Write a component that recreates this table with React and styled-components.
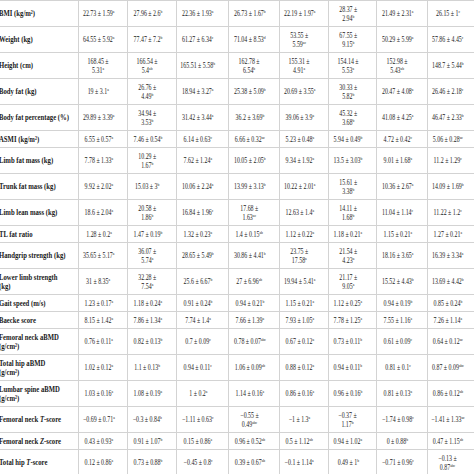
import React from 'react';
import styled, { createGlobalStyle } from 'styled-components';

const COL_WIDTHS = [82, 49, 49, 52, 51, 49, 48, 51, 50];

// "|" marks a line break inside a cell, "^" starts the superscript letters
const ROWS = [
  ['BMI (kg/m²)', ['22.73 ± 1.59^a', '27.96 ± 2.6^b', '22.36 ± 1.93^a', '26.73 ± 1.67^b', '22.19 ± 1.97^a', '28.37 ±|2.94^b', '21.49 ± 2.31^a', '26.15 ± 1^c']],
  ['Weight (kg)', ['64.55 ± 5.92^a', '77.47 ± 7.2^b', '61.27 ± 6.34^c', '71.04 ± 8.53^d', '53.55 ±|5.59^ac', '67.55 ±|9.15^b', '50.29 ± 5.99^a', '57.86 ± 4.45^c']],
  ['Height (cm)', ['168.45 ±|5.31^a', '166.54 ±|5.4^ab', '165.51 ± 5.58^b', '162.78 ±|6.54^b', '155.31 ±|4.91^a', '154.14 ±|5.53^a', '152.98 ±|5.43^ab', '148.7 ± 5.44^b']],
  ['Body fat (kg)', ['19 ± 3.1^a', '26.76 ±|4.49^b', '18.94 ± 3.27^a', '25.38 ± 5.09^b', '20.69 ± 3.55^a', '30.33 ±|5.82^b', '20.47 ± 4.08^a', '26.46 ± 2.18^c']],
  ['Body fat percentage (%)', ['29.89 ± 3.39^a', '34.94 ±|3.53^b', '31.42 ± 3.44^a', '36.2 ± 3.69^b', '39.06 ± 3.9^a', '45.32 ±|3.68^b', '41.08 ± 4.25^a', '46.47 ± 2.33^b']],
  ['ASMI (kg/m²)', ['6.55 ± 0.57^a', '7.46 ± 0.54^b', '6.14 ± 0.63^c', '6.66 ± 0.32^ac', '5.23 ± 0.48^a', '5.94 ± 0.49^b', '4.72 ± 0.42^c', '5.06 ± 0.28^ac']],
  ['Limb fat mass (kg)', ['7.78 ± 1.33^a', '10.29 ±|1.67^b', '7.62 ± 1.24^a', '10.05 ± 2.05^b', '9.34 ± 1.92^a', '13.5 ± 3.03^b', '9.01 ± 1.68^a', '11.2 ± 1.29^c']],
  ['Trunk fat mass (kg)', ['9.92 ± 2.02^a', '15.03 ± 3^b', '10.06 ± 2.24^a', '13.99 ± 3.13^b', '10.22 ± 2.01^a', '15.61 ±|3.38^b', '10.36 ± 2.67^a', '14.09 ± 1.69^b']],
  ['Limb lean mass (kg)', ['18.6 ± 2.04^a', '20.58 ±|1.86^b', '16.84 ± 1.96^c', '17.68 ±|1.63^ac', '12.63 ± 1.4^a', '14.11 ±|1.68^b', '11.04 ± 1.14^c', '11.22 ± 1.2^c']],
  ['TL fat ratio', ['1.28 ± 0.2^a', '1.47 ± 0.19^b', '1.32 ± 0.23^a', '1.4 ± 0.15^ab', '1.12 ± 0.22^a', '1.18 ± 0.21^a', '1.15 ± 0.21^a', '1.27 ± 0.21^a']],
  ['Handgrip strength (kg)', ['35.65 ± 5.17^a', '36.07 ±|5.74^a', '28.65 ± 5.49^b', '30.86 ± 4.41^b', '23.75 ±|17.58^a', '21.54 ±|4.23^a', '18.16 ± 3.65^a', '16.39 ± 3.34^a']],
  ['Lower limb strength|(kg)', ['31 ± 8.35^a', '32.28 ±|7.54^a', '25.6 ± 6.67^b', '27 ± 6.96^ab', '19.94 ± 5.41^a', '21.17 ±|9.05^a', '15.52 ± 4.43^b', '13.69 ± 4.42^b']],
  ['Gait speed (m/s)', ['1.23 ± 0.17^a', '1.18 ± 0.24^a', '0.91 ± 0.24^b', '0.94 ± 0.21^b', '1.15 ± 0.21^a', '1.12 ± 0.25^a', '0.94 ± 0.19^b', '0.85 ± 0.24^b']],
  ['Baecke score', ['8.15 ± 1.42^a', '7.86 ± 1.34^a', '7.74 ± 1.4^a', '7.66 ± 1.39^a', '7.93 ± 1.05^a', '7.78 ± 1.25^a', '7.55 ± 1.16^a', '7.26 ± 1.14^a']],
  ['Femoral neck aBMD|(g/cm²)', ['0.76 ± 0.11^a', '0.82 ± 0.13^b', '0.7 ± 0.09^c', '0.78 ± 0.07^abc', '0.67 ± 0.12^a', '0.73 ± 0.11^b', '0.61 ± 0.09^c', '0.64 ± 0.12^ac']],
  ['Total hip aBMD|(g/cm²)', ['1.02 ± 0.12^a', '1.1 ± 0.13^b', '0.94 ± 0.11^c', '1.06 ± 0.09^ab', '0.88 ± 0.12^a', '0.94 ± 0.11^b', '0.81 ± 0.1^c', '0.87 ± 0.09^abc']],
  ['Lumbar spine aBMD|(g/cm²)', ['1.03 ± 0.16^a', '1.08 ± 0.19^a', '1 ± 0.2^a', '1.14 ± 0.16^a', '0.86 ± 0.16^a', '0.96 ± 0.16^b', '0.81 ± 0.13^a', '0.86 ± 0.12^ab']],
  ['Femoral neck *T*-score', ['−0.69 ± 0.71^a', '−0.3 ± 0.84^b', '−1.11 ± 0.63^c', '−0.55 ±|0.49^abc', '−1 ± 1.3^a', '−0.37 ±|1.17^b', '−1.74 ± 0.98^c', '−1.41 ± 1.33^ac']],
  ['Femoral neck *Z*-score', ['0.43 ± 0.93^a', '0.91 ± 1.07^b', '0.15 ± 0.86^a', '0.96 ± 0.52^ab', '0.5 ± 1.12^ab', '0.94 ± 1.02^a', '0 ± 0.88^b', '0.47 ± 1.15^ab']],
  ['Total hip *T*-score', ['0.12 ± 0.86^a', '0.73 ± 0.88^b', '−0.45 ± 0.8^c', '0.39 ± 0.67^ab', '−0.1 ± 1.14^a', '0.49 ± 1^b', '−0.71 ± 0.96^c', '−0.13 ±|0.87^abc']],
];

const renderLabelLine = (line) =>
  line.split('*').map((part, i) => (i % 2 ? <i key={i}>{part}</i> : part));

const renderLabel = (label) =>
  label.split('|').map((line, i) => (
    <React.Fragment key={i}>
      {i > 0 && <br />}
      {renderLabelLine(line)}
    </React.Fragment>
  ));

const renderValue = (value) =>
  value.split('|').map((line, i) => {
    const [text, sup] = line.split('^');
    return (
      <React.Fragment key={i}>
        {i > 0 && <br />}
        {text}
        {sup && <Sup>{sup}</Sup>}
      </React.Fragment>
    );
  });

const App = () => (
  <>
    <GlobalStyle />
    <Frame>
      <Table>
        <colgroup>
          {COL_WIDTHS.map((w, i) => (
            <col key={i} style={{ width: w }} />
          ))}
        </colgroup>
        <tbody>
          {ROWS.map(([label, values]) => (
            <tr key={label}>
              <LabelCell>
                <LabelText>{renderLabel(label)}</LabelText>
              </LabelCell>
              {values.map((v, i) => (
                <ValueCell key={i}>
                  <ValueText>{renderValue(v)}</ValueText>
                </ValueCell>
              ))}
            </tr>
          ))}
        </tbody>
      </Table>
    </Frame>
  </>
);

const GlobalStyle = createGlobalStyle`
  html, body {
    margin: 0;
    padding: 0;
    background: #fff;
  }
`;

const Frame = styled.div`
  width: 474px;
  height: 474px;
  overflow: hidden;
  background: #fff;
`;

const Table = styled.table`
  table-layout: fixed;
  border-collapse: collapse;
  width: 481px;
  margin-left: -4px;
  font-family: "Liberation Serif", "Times New Roman", serif;
  font-size: 7px;
  color: #1a1a1a;
  border-top: 1px solid #d3d3d3;
`;

const Cell = styled.td`
  border: 1px solid #d3d3d3;
  padding: 3.5px 0;
  font-size: 0;
  line-height: 9px;
  vertical-align: middle;
  white-space: nowrap;
`;

const LabelCell = styled(Cell)`
  border-left: none;
  padding-left: 3px;
  text-align: left;
`;

const LabelText = styled.span`
  display: inline-block;
  vertical-align: top;
  font-weight: bold;
  font-size: 8.4px;
  line-height: 9px;
  transform: scaleX(0.8);
  transform-origin: left center;
`;

const ValueCell = styled(Cell)`
  text-align: center;
`;

const ValueText = styled.span`
  display: inline-block;
  vertical-align: top;
  font-size: 7.4px;
  line-height: 9px;
  transform: translateX(-4px) scaleX(0.8);
  transform-origin: center;
`;

const Sup = styled.sup`
  font-size: 4.6px;
  line-height: 0;
  vertical-align: 2.6px;
`;

export default App;
